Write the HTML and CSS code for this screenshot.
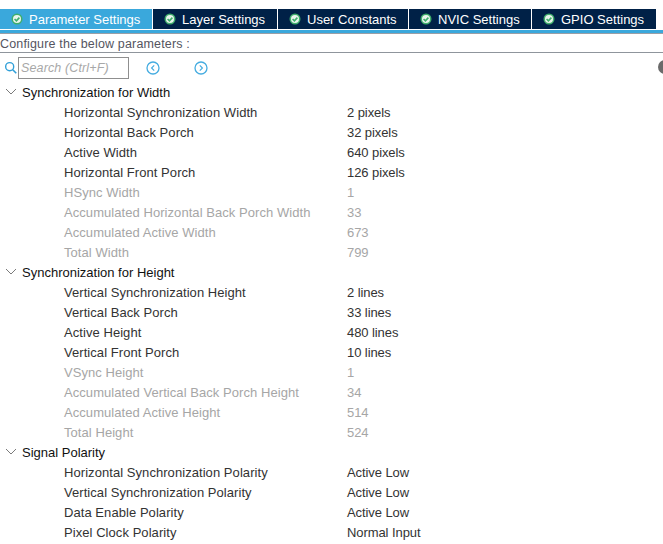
FILE: index.html
```html
<!DOCTYPE html>
<html lang="en">
<head>
<meta charset="utf-8">
<title>Parameter Settings</title>
<link rel="stylesheet" href="styles.css">
</head>
<body>
<svg class="defs" width="0" height="0" aria-hidden="true">
  <symbol id="ok" viewBox="0 0 12 12">
    <circle cx="6" cy="6" r="5.5" fill="#3fae6c"/>
    <circle cx="6" cy="6" r="4" fill="#e8f5ec"/>
    <path d="M3.6 6l1.8 1.8 3-3.2" fill="none" stroke="#3fae6c" stroke-width="1.6"/>
  </symbol>
</svg>
<nav class="tabs">
  <div class="tab active tab-param"><svg class="ok"><use href="#ok"/></svg><span>Parameter Settings</span></div>
  <div class="tab tab-layer"><svg class="ok"><use href="#ok"/></svg><span>Layer Settings</span></div>
  <div class="tab tab-user"><svg class="ok"><use href="#ok"/></svg><span>User Constants</span></div>
  <div class="tab tab-nvic"><svg class="ok"><use href="#ok"/></svg><span>NVIC Settings</span></div>
  <div class="tab tab-gpio"><svg class="ok"><use href="#ok"/></svg><span>GPIO Settings</span></div>
</nav>
<div class="configure">Configure the below parameters :</div>
<div class="toolbar">
  <svg class="search-icon" viewBox="0 0 16 16"><circle cx="6.5" cy="6.5" r="4.6" fill="none" stroke="#2f9fd8" stroke-width="1.6"/><path d="M10 10l4 4" stroke="#2f9fd8" stroke-width="1.9"/></svg>
  <div class="search">Search (Ctrl+F)</div>
  <svg class="nav-icon" viewBox="0 0 14 14"><circle cx="7" cy="7" r="6" fill="none" stroke="#45ace0" stroke-width="1.3"/><path d="M8.2 4.4L5.6 7l2.6 2.6" fill="none" stroke="#45ace0" stroke-width="1.2"/></svg>
  <svg class="nav-icon next" viewBox="0 0 14 14"><circle cx="7" cy="7" r="6" fill="none" stroke="#45ace0" stroke-width="1.3"/><path d="M5.8 4.4L8.4 7l-2.6 2.6" fill="none" stroke="#45ace0" stroke-width="1.2"/></svg>
  <div class="scroll-knob"></div>
</div>
<main class="tree">
  <div class="group"><svg class="chev" viewBox="0 0 12 8"><path d="M1 1l5 5 5-5" fill="none" stroke="#7a7a7a" stroke-width="1"/></svg>Synchronization for Width</div>
  <div class="row"><span class="name">Horizontal Synchronization Width</span><span class="value">2 pixels</span></div>
  <div class="row"><span class="name">Horizontal Back Porch</span><span class="value">32 pixels</span></div>
  <div class="row"><span class="name">Active Width</span><span class="value">640 pixels</span></div>
  <div class="row"><span class="name">Horizontal Front Porch</span><span class="value">126 pixels</span></div>
  <div class="row off"><span class="name">HSync Width</span><span class="value">1</span></div>
  <div class="row off"><span class="name">Accumulated Horizontal Back Porch Width</span><span class="value">33</span></div>
  <div class="row off"><span class="name">Accumulated Active Width</span><span class="value">673</span></div>
  <div class="row off"><span class="name">Total Width</span><span class="value">799</span></div>
  <div class="group"><svg class="chev" viewBox="0 0 12 8"><path d="M1 1l5 5 5-5" fill="none" stroke="#7a7a7a" stroke-width="1"/></svg>Synchronization for Height</div>
  <div class="row"><span class="name">Vertical Synchronization Height</span><span class="value">2 lines</span></div>
  <div class="row"><span class="name">Vertical Back Porch</span><span class="value">33 lines</span></div>
  <div class="row"><span class="name">Active Height</span><span class="value">480 lines</span></div>
  <div class="row"><span class="name">Vertical Front Porch</span><span class="value">10 lines</span></div>
  <div class="row off"><span class="name">VSync Height</span><span class="value">1</span></div>
  <div class="row off"><span class="name">Accumulated Vertical Back Porch Height</span><span class="value">34</span></div>
  <div class="row off"><span class="name">Accumulated Active Height</span><span class="value">514</span></div>
  <div class="row off"><span class="name">Total Height</span><span class="value">524</span></div>
  <div class="group"><svg class="chev" viewBox="0 0 12 8"><path d="M1 1l5 5 5-5" fill="none" stroke="#7a7a7a" stroke-width="1"/></svg>Signal Polarity</div>
  <div class="row"><span class="name">Horizontal Synchronization Polarity</span><span class="value">Active Low</span></div>
  <div class="row"><span class="name">Vertical Synchronization Polarity</span><span class="value">Active Low</span></div>
  <div class="row"><span class="name">Data Enable Polarity</span><span class="value">Active Low</span></div>
  <div class="row"><span class="name">Pixel Clock Polarity</span><span class="value">Normal Input</span></div>
</main>
</body>
</html>
```
FILE: styles.css
```css
* { box-sizing: border-box; }
html, body { margin: 0; height: 100%; overflow: hidden; background: #fff; }
body { padding-top: 9px; font-family: "Liberation Sans", Arial, sans-serif; font-size: 13px; color: #2a2a2a; width: 663px; height: 544px; }
.defs { position: absolute; }
.tabs { display: flex; height: 24px; border-bottom: 3px solid #3aa8dc; box-shadow: 0 1px 0 #9a9fa6; gap: 1px; }
.tab { height: 20px; background: #002147; color: #fff; display: flex; align-items: center; padding-left: 11px; gap: 6px; white-space: nowrap; }
.tab.active { background: #3aa8dc; }
.tab-param { width: 152px; }
.tab-layer { width: 124px; }
.tab-user { width: 130px; }
.tab-nvic { width: 122px; }
.tab-gpio { width: 124px; }
.ok { width: 12px; height: 12px; flex: none; margin-top: -1px; }
.configure { height: 19px; margin-top: 1px; border-bottom: 1px solid #8f959c; line-height: 20px; color: #55555f; font-size: 12.5px; letter-spacing: 0.16px; white-space: nowrap; }
.toolbar { position: relative; height: 30px; display: flex; align-items: center; padding-left: 4px; }
.search-icon { width: 14px; height: 14px; flex: none; }
.search { width: 111px; height: 22px; border: 1px solid #8f8f8f; font-style: italic; color: #a8a8a8; line-height: 20px; padding-left: 2px; font-size: 12.5px; letter-spacing: 0.13px; white-space: nowrap; }
.nav-icon { width: 14px; height: 14px; margin-left: 17px; }
.nav-icon.next { margin-left: 34px; }
.scroll-knob { position: absolute; left: 658px; top: 7px; width: 14px; height: 14px; border-radius: 50%; background: #6a6a6a; }
.group { height: 20px; display: flex; align-items: center; padding: 0 0 2px 5px; gap: 5px; color: #111; white-space: nowrap; }
.chev { width: 12px; height: 8px; }
.row { height: 20px; line-height: 20px; display: flex; color: #333; white-space: nowrap; }
.name { width: 283px; margin-left: 64px; flex: none; letter-spacing: 0.06px; }
.value { letter-spacing: -0.08px; }
.off { color: #a6a6a6; }
```
